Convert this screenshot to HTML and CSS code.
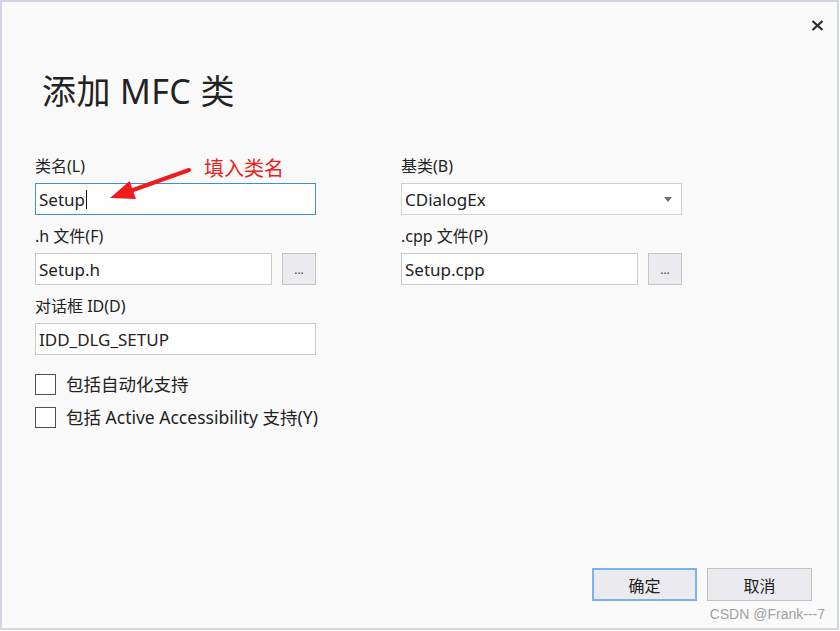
FILE: index.html
```html
<!DOCTYPE html>
<html lang="zh-CN">
<head>
<meta charset="utf-8">
<title>添加 MFC 类</title>
<link rel="stylesheet" href="styles.css">
</head>
<body>
<div class="window">
  <div class="topbar">
    <button class="close" aria-label="关闭">
      <svg width="13" height="11" viewBox="0 0 13 11"><path d="M1.5 1 L11.5 10 M11.5 1 L1.5 10" stroke="#2b2b2b" stroke-width="2.2" fill="none"/></svg>
    </button>
  </div>
  <h1 class="title">添加 MFC 类</h1>
  <div class="form">
    <div class="col">
      <div class="field">
        <label class="label">类名(L)</label>
        <div class="input focused"><span>Setup</span><span class="caret"></span></div>
      </div>
      <div class="field">
        <label class="label">.h 文件(F)</label>
        <div class="row">
          <div class="input short"><span>Setup.h</span></div>
          <button class="browse">...</button>
        </div>
      </div>
      <div class="field">
        <label class="label">对话框 ID(D)</label>
        <div class="input"><span>IDD_DLG_SETUP</span></div>
      </div>
      <div class="checks">
        <div class="check"><span class="box"></span><span>包括自动化支持</span></div>
        <div class="check"><span class="box"></span><span>包括 Active Accessibility 支持(Y)</span></div>
      </div>
    </div>
    <div class="col">
      <div class="field">
        <label class="label">基类(B)</label>
        <div class="input select"><span>CDialogEx</span>
          <svg class="arrow" width="8" height="5" viewBox="0 0 8 5"><path d="M0 0 H8 L4 5 Z" fill="#6f6f6f"/></svg>
        </div>
      </div>
      <div class="field">
        <label class="label">.cpp 文件(P)</label>
        <div class="row">
          <div class="input short"><span>Setup.cpp</span></div>
          <button class="browse">...</button>
        </div>
      </div>
    </div>
  </div>
  <div class="spacer"></div>
  <div class="footer">
    <button class="btn primary">确定</button>
    <button class="btn">取消</button>
  </div>
  <div class="watermark">CSDN @Frank---7</div>
  <div class="annotation">
    <svg class="anno-arrow" width="100" height="40" viewBox="0 0 100 40">
      <path d="M87 5 L31 25" stroke="#f01c1c" stroke-width="4" stroke-linecap="round" fill="none"/>
      <path d="M8 33 L27.6 16 L34 34 Z" fill="#f01c1c"/>
    </svg>
    <span class="anno-text">填入类名</span>
  </div>
</div>
</body>
</html>
```
FILE: styles.css
```css
html, body {
  margin: 0;
  padding: 0;
  background: #ffffff;
}
body {
  font-family: "Noto Sans", "Noto Sans CJK SC", sans-serif;
  color: #1e1e1e;
}
.window {
  position: relative;
  box-sizing: border-box;
  width: 839px;
  height: 630px;
  border: 2px solid #d3d6e2;
  background: #fafafb;
  display: flex;
  flex-direction: column;
}
.topbar {
  height: 46px;
  display: flex;
  justify-content: flex-end;
  align-items: center;
  padding-right: 12px;
}
.close {
  border: none;
  background: transparent;
  padding: 0;
  width: 16px;
  height: 16px;
  display: flex;
  align-items: center;
  justify-content: center;
}
.title {
  margin: 20px 0 0 40px;
  font-weight: normal;
  font-size: 34px;
  line-height: 46px;
  color: #222;
  letter-spacing: 0.4px;
}
.form {
  margin: 42px 0 0 33px;
  display: grid;
  grid-template-columns: 281px 281px;
  column-gap: 85px;
}
.col {
  display: flex;
  flex-direction: column;
  gap: 11px;
}
.field {
  display: flex;
  flex-direction: column;
  gap: 7px;
}
.label {
  font-size: 16px;
  line-height: 20px;
  color: #222;
}
.input {
  box-sizing: border-box;
  height: 32px;
  border: 1px solid #cacaca;
  background: #fff;
  display: flex;
  align-items: center;
  padding-left: 3px;
  font-size: 17px;
  color: #222;
}
.input.focused {
  border-color: #3f8fd8;
}
.caret {
  display: inline-block;
  width: 1px;
  height: 19px;
  background: #111;
  margin-left: 1px;
}
.input.select {
  justify-content: space-between;
  padding-right: 9px;
  border-color: #d2d2d2;
}
.row {
  display: flex;
  gap: 10px;
}
.input.short {
  width: 237px;
}
.browse {
  box-sizing: border-box;
  width: 34px;
  height: 32px;
  border: 1px solid #c4c4c4;
  background: #ececf0;
  color: #444;
  font-size: 12px;
  padding: 0 0 6px 0;
  font-family: "Noto Sans", sans-serif;
  display: flex;
  align-items: flex-end;
  justify-content: center;
}
.checks {
  margin-top: 8px;
  display: flex;
  flex-direction: column;
  gap: 12px;
}
.check {
  display: flex;
  align-items: center;
  gap: 10px;
  font-size: 17.5px;
  line-height: 21px;
  height: 21px;
  color: #222;
  white-space: nowrap;
}
.box {
  box-sizing: border-box;
  flex: none;
  width: 21px;
  height: 21px;
  border: 1px solid #505050;
  background: #fff;
}
.spacer {
  flex: 1;
}
.footer {
  display: flex;
  justify-content: flex-end;
  gap: 10px;
  padding-right: 25px;
  margin-bottom: 27px;
}
.btn {
  box-sizing: border-box;
  width: 105px;
  height: 33px;
  border: 1px solid #c2c2c2;
  background: #ebebef;
  font-family: "Noto Sans CJK SC", sans-serif;
  font-size: 16px;
  color: #222;
}
.btn.primary {
  border: 2px solid #7ab2f2;
}
.watermark {
  position: absolute;
  right: 12px;
  bottom: 6px;
  font-family: "Liberation Sans", sans-serif;
  font-size: 14px;
  color: #a2a2a2;
}
.annotation {
  position: absolute;
  left: 100px;
  top: 153px;
  display: flex;
  align-items: flex-start;
}
.anno-arrow {
  margin-top: 10px;
}
.anno-text {
  margin-left: 2px;
  font-family: "Noto Sans CJK SC", sans-serif;
  font-size: 20px;
  line-height: 26px;
  color: #f01c1c;
}
```
